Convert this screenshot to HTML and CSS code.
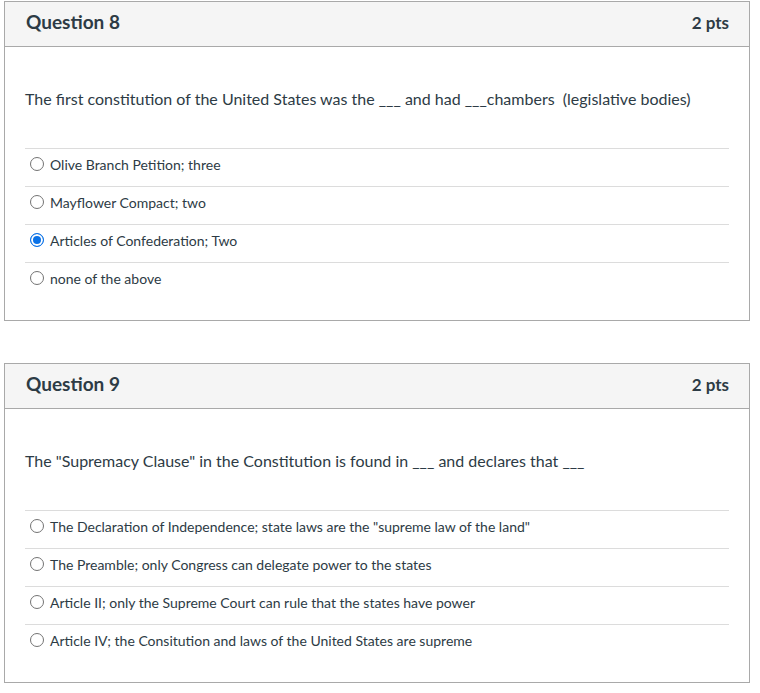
FILE: index.html
```html
<!DOCTYPE html>
<html lang="en">
<head>
  <meta charset="UTF-8" />
  <title>Quiz</title>
  <link rel="stylesheet" href="styles.css">
</head>
<body>
  <div class="question">
    <div class="q-header">
      <span class="q-name">Question 8</span>
      <span class="q-points">2 pts</span>
    </div>
    <div class="q-body">
      <p class="q-text">The first constitution of the United States was the ___ and had ___chambers&nbsp; (legislative bodies)</p>
      <div class="answers">
        <label class="answer"><span class="radio"></span>Olive Branch Petition; three</label>
        <label class="answer"><span class="radio"></span>Mayflower Compact; two</label>
        <label class="answer"><span class="radio checked"></span>Articles of Confederation; Two</label>
        <label class="answer"><span class="radio"></span>none of the above</label>
      </div>
    </div>
  </div>

  <div class="question">
    <div class="q-header">
      <span class="q-name">Question 9</span>
      <span class="q-points">2 pts</span>
    </div>
    <div class="q-body">
      <p class="q-text">The "Supremacy Clause" in the Constitution is found in ___ and declares that ___</p>
      <div class="answers">
        <label class="answer"><span class="radio"></span>The Declaration of Independence; state laws are the "supreme law of the land"</label>
        <label class="answer"><span class="radio"></span>The Preamble; only Congress can delegate power to the states</label>
        <label class="answer"><span class="radio"></span>Article II; only the Supreme Court can rule that the states have power</label>
        <label class="answer"><span class="radio"></span>Article IV; the Consitution and laws of the United States are supreme</label>
      </div>
    </div>
  </div>
</body>
</html>
```

FILE: styles.css
```css
:root {
  --text: #2d3b45;
  --card-border: #a9a9a9;
  --header-bg: #f5f5f5;
  --rule: #dcdcdc;
  --blue: #0b72e7;
}

* { box-sizing: border-box; }

html, body { margin: 0; background: #fff; }
body {
  font-family: Lato, "Liberation Sans", sans-serif;
  color: var(--text);
  padding: 1px 10px 0 4px;
}

.question {
  border: 1px solid var(--card-border);
  margin-bottom: 42px;
}

.q-header {
  height: 45px;
  background: var(--header-bg);
  border-bottom: 1px solid var(--card-border);
  display: flex;
  align-items: center;
  justify-content: space-between;
  padding: 0 20px 5px 21px;
}
.q-name { font-size: 19px; font-weight: bold; }
.q-points { font-size: 17px; font-weight: bold; position: relative; top: 1px; }

.q-body { padding: 41px 20px 20px 20px; }
.q-text {
  margin: 0 0 38px 0;
  font-size: 16px;
  line-height: 22px;
}

.answer {
  display: flex;
  align-items: center;
  height: 38px;
  border-top: 1px solid var(--rule);
  font-size: 14px;
  padding-left: 5px;
  padding-bottom: 7px;
}

.radio {
  width: 14px;
  height: 14px;
  border: 1px solid #737373;
  border-radius: 50%;
  margin-right: 6px;
  flex: none;
  background: #fff;
}
.radio.checked {
  border-color: var(--blue);
  box-shadow: inset 0 0 0 2px #fff;
  background: var(--blue);
}
```
